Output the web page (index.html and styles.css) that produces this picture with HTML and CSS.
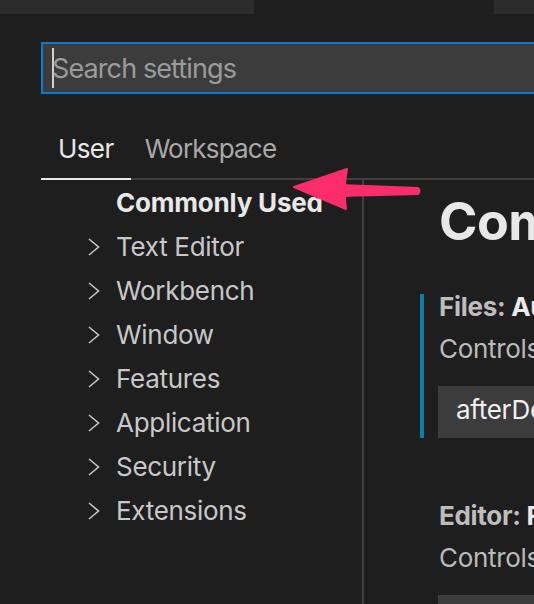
FILE: index.html
```html
<!DOCTYPE html>
<html>
<head>
<meta charset="utf-8">
<link rel="stylesheet" href="styles.css">
</head>
<body>
<div class="page">
  <div class="editor-tabs">
    <div class="etab etab-a"></div>
    <div class="etab etab-b"></div>
    <div class="etab etab-c"></div>
  </div>
  <div class="settings">
    <div class="search">
      <span class="caret"></span>
      <span class="placeholder">Search settings</span>
    </div>
    <div class="scope-tabs">
      <div class="scope active">User</div>
      <div class="scope">Workspace</div>
    </div>
    <div class="body">
      <nav class="toc">
        <div class="toc-row toc-head">Commonly Used</div>
        <div class="toc-row"><svg class="chev" viewBox="0 0 14 20" width="14" height="20"><path d="M2 2 L11.5 10 L2 18" /></svg><span>Text Editor</span></div>
        <div class="toc-row"><svg class="chev" viewBox="0 0 14 20" width="14" height="20"><path d="M2 2 L11.5 10 L2 18" /></svg><span>Workbench</span></div>
        <div class="toc-row"><svg class="chev" viewBox="0 0 14 20" width="14" height="20"><path d="M2 2 L11.5 10 L2 18" /></svg><span>Window</span></div>
        <div class="toc-row"><svg class="chev" viewBox="0 0 14 20" width="14" height="20"><path d="M2 2 L11.5 10 L2 18" /></svg><span>Features</span></div>
        <div class="toc-row"><svg class="chev" viewBox="0 0 14 20" width="14" height="20"><path d="M2 2 L11.5 10 L2 18" /></svg><span>Application</span></div>
        <div class="toc-row"><svg class="chev" viewBox="0 0 14 20" width="14" height="20"><path d="M2 2 L11.5 10 L2 18" /></svg><span>Security</span></div>
        <div class="toc-row"><svg class="chev" viewBox="0 0 14 20" width="14" height="20"><path d="M2 2 L11.5 10 L2 18" /></svg><span>Extensions</span></div>
      </nav>
      <main class="content">
        <h1 class="group-title">Commonly Used</h1>
        <div class="setting focused">
          <div class="setting-title"><span class="cat">Files: </span><span class="key">Auto Save</span></div>
          <div class="setting-desc">Controls auto save of dirty editors.</div>
          <div class="select">afterDelay</div>
        </div>
        <div class="setting">
          <div class="setting-title"><span class="cat">Editor: </span><span class="key">Font Size</span></div>
          <div class="setting-desc">Controls the font size in pixels.</div>
          <div class="select">14</div>
        </div>
      </main>
    </div>
  </div>
  <svg class="arrow" width="534" height="604" viewBox="0 0 534 604">
    <path d="M294 187 L347 169 Q343 189 346 209 Z" />
    <path d="M340 185 L418 188 Q421 191 418 194 L340 196 Z" />
  </svg>
</div>
</body>
</html>
```

FILE: styles.css
```css
html, body {
  margin: 0;
  padding: 0;
  background: #1e1e1e;
}
.page {
  position: relative;
  width: 534px;
  height: 604px;
  overflow: hidden;
  background: #1e1e1e;
  font-family: Inter, "Noto Sans", sans-serif;
  color: #cccccc;
  letter-spacing: -0.3px;
}
.editor-tabs {
  display: flex;
  height: 14px;
}
.etab-a { width: 254px; background: #2c2c2c; }
.etab-b { width: 240px; background: #1f1f1f; }
.etab-c { flex: 1; background: #2c2c2c; }

.settings {
  padding: 28px 0 0 41px;
}
.search {
  position: relative;
  box-sizing: border-box;
  width: 620px;
  height: 52px;
  border: 2px solid #0a7bcf;
  background: #3c3c3c;
  padding-left: 9px;
  display: flex;
  align-items: center;
}
.placeholder {
  font-size: 27px;
  line-height: 48px;
  color: #9b9b9b;
  letter-spacing: -0.9px;
  position: relative;
  top: 1px;
}
.caret {
  position: absolute;
  left: 9px;
  top: 4px;
  width: 2px;
  height: 40px;
  background: #cfcfcf;
}
.scope-tabs {
  display: flex;
  padding-top: 39px;
  border-bottom: 2px solid #3f3f3f;
  width: 620px;
}
.scope {
  font-size: 26px;
  line-height: 32px;
  padding: 0 15px 13px 14px;
  margin-bottom: -2px;
  border-bottom: 2px solid transparent;
  color: #a9a9a9;
  letter-spacing: -0.8px;
}
.scope.active {
  padding: 0 17px 13px 17px;
  color: #e8e8e8;
  border-bottom-color: #e8e8e8;
  letter-spacing: -0.6px;
}
.body {
  display: flex;
}
.toc {
  box-sizing: border-box;
  width: 323px;
  border-right: 2px solid #3f3f3f;
  height: 440px;
  flex: none;
  padding-top: 1px;
}
.toc-row {
  display: flex;
  align-items: center;
  height: 44px;
  font-size: 26px;
  line-height: 44px;
  padding-left: 46px;
  white-space: nowrap;
  color: #c8c8c8;
}
.toc-row span { margin-left: 15px; }
.toc-head {
  padding-left: 75px;
  font-weight: 700;
  color: #e8e8e8;
  letter-spacing: -0.2px;
}
.chev {
  flex: none;
  display: block;
}
.chev path {
  fill: none;
  stroke: #c5c5c5;
  stroke-width: 1.6;
}
.content {
  flex: 1;
  padding-left: 56px;
  overflow: hidden;
  white-space: nowrap;
}
.group-title {
  margin: 12px 0 0 0;
  padding-left: 19px;
  font-size: 52px;
  line-height: 60px;
  font-weight: 700;
  color: #e8e8e8;
  letter-spacing: -0.5px;
}
.setting {
  border-left: 4px solid transparent;
  padding-left: 15px;
  margin-top: 65px;
}
.setting.focused {
  border-left-color: #0f7ea6;
  margin-top: 42px;
}
.setting-title {
  font-size: 26px;
  line-height: 26px;
  font-weight: 700;
}
.cat { color: #bdbdbd; }
.key { color: #eaeaea; }
.setting-desc {
  margin-top: 16px;
  font-size: 26px;
  line-height: 26px;
  color: #bbbbbb;
}
.select {
  margin-top: 24px;
  margin-left: -1px;
  width: 400px;
  height: 52px;
  box-sizing: border-box;
  padding: 0 0 4px 18px;
  background: #3c3c3c;
  font-size: 26px;
  line-height: 48px;
  color: #f0f0f0;
}
.arrow {
  position: absolute;
  left: 0;
  top: 0;
  pointer-events: none;
}
.arrow path {
  fill: #fd2c6b;
  stroke: #fd2c6b;
  stroke-width: 2;
  stroke-linejoin: round;
}
```
